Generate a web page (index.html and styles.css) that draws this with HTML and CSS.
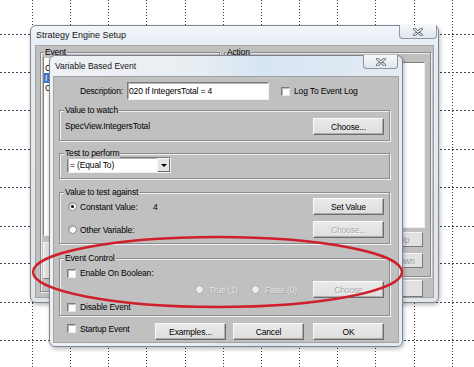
FILE: index.html
```html
<!DOCTYPE html>
<html>
<head>
<meta charset="utf-8">
<title>Strategy Engine Setup</title>
<link rel="stylesheet" href="styles.css">
</head>
<body>
<div class="desktop">
  <svg class="grid" width="474" height="367" viewBox="0 0 474 367">
    <g class="v">
      <line x1="32.5" y1="0" x2="32.5" y2="367"/>
      <line x1="70.5" y1="0" x2="70.5" y2="367"/>
      <line x1="108.5" y1="0" x2="108.5" y2="367"/>
      <line x1="146.5" y1="0" x2="146.5" y2="367"/>
      <line x1="185.5" y1="0" x2="185.5" y2="367"/>
      <line x1="223.5" y1="0" x2="223.5" y2="367"/>
      <line x1="261.5" y1="0" x2="261.5" y2="367"/>
      <line x1="299.5" y1="0" x2="299.5" y2="367"/>
      <line x1="337.5" y1="0" x2="337.5" y2="367"/>
      <line x1="375.5" y1="0" x2="375.5" y2="367"/>
      <line x1="414.5" y1="0" x2="414.5" y2="367"/>
      <line x1="452.5" y1="0" x2="452.5" y2="367"/>
    </g>
    <g class="h">
      <line x1="0" y1="34.5" x2="474" y2="34.5"/>
      <line x1="0" y1="72.5" x2="474" y2="72.5"/>
      <line x1="0" y1="110.5" x2="474" y2="110.5"/>
      <line x1="0" y1="149.5" x2="474" y2="149.5"/>
      <line x1="0" y1="187.5" x2="474" y2="187.5"/>
      <line x1="0" y1="226.5" x2="474" y2="226.5"/>
      <line x1="0" y1="263.5" x2="474" y2="263.5"/>
      <line x1="0" y1="302.5" x2="474" y2="302.5"/>
      <line x1="0" y1="340.5" x2="474" y2="340.5"/>
    </g>
  </svg>

  <div class="win win-outer">
    <div class="titlebar">
      <span class="title">Strategy Engine Setup</span>
      <div class="close">
        <svg width="10" height="8" viewBox="0 0 10 8"><path class="x-out" d="M1.5 1 L8.5 7 M8.5 1 L1.5 7"/><path class="x-in" d="M1.5 1 L8.5 7 M8.5 1 L1.5 7"/></svg>
      </div>
    </div>
    <div class="client outer-client">
      <div class="ocol-left">
        <div class="ogroup og-event">
          <span class="oglabel">Event</span>
          <div class="olist">
            <span class="oitem">C</span>
            <span class="oitem sel">I</span>
            <span class="oitem">C</span>
          </div>
          <div class="obtn obtn-left"></div>
        </div>
      </div>
      <div class="ocol-right">
        <div class="ogroup og-action">
          <span class="oglabel">Action</span>
          <div class="olist olist-action"></div>
          <div class="obtn">Up</div>
          <div class="obtn">Down</div>
        </div>
        <div class="obtn obtn-close"></div>
      </div>
    </div>
  </div>

  <div class="win win-inner">
    <div class="titlebar">
      <span class="title">Variable Based Event</span>
      <div class="close">
        <svg width="10" height="8" viewBox="0 0 10 8"><path class="x-out" d="M1.5 1 L8.5 7 M8.5 1 L1.5 7"/><path class="x-in" d="M1.5 1 L8.5 7 M8.5 1 L1.5 7"/></svg>
      </div>
    </div>
    <div class="client inner-client">
      <div class="desc-row">
        <span class="desc-label">Description:</span>
        <div class="input">020 If IntegersTotal = 4</div>
        <div class="opt log-opt"><span class="cb"></span><span>Log To Event Log</span></div>
      </div>

      <div class="group g-watch">
        <span class="glabel">Value to watch</span>
        <span>SpecView.IntegersTotal</span>
        <div class="btn">Choose...</div>
      </div>

      <div class="group g-test">
        <span class="glabel">Test to perform</span>
        <div class="select"><span>= (Equal To)</span><span class="arrow"><i class="tri"></i></span></div>
      </div>

      <div class="group g-against">
        <span class="glabel">Value to test against</span>
        <div class="grow">
          <div class="opt"><span class="rb on"></span><span class="val-label">Constant Value:</span><span>4</span></div>
          <div class="btn">Set Value</div>
        </div>
        <div class="grow">
          <div class="opt"><span class="rb"></span><span>Other Variable:</span></div>
          <div class="btn dis">Choose...</div>
        </div>
      </div>

      <div class="group g-control">
        <span class="glabel">Event Control</span>
        <div class="opt crow-a"><span class="cb"></span><span>Enable On Boolean:</span></div>
        <div class="crow-b">
          <div class="opt ropt true-opt"><span class="rb dis"></span><span class="dtext">True (1)</span></div>
          <div class="opt ropt false-opt"><span class="rb dis"></span><span class="dtext">False (0)</span></div>
          <div class="btn dis">Choose</div>
        </div>
        <div class="opt crow-c"><span class="cb"></span><span>Disable Event</span></div>
      </div>

      <div class="bottom-row">
        <div class="opt startup-opt"><span class="cb"></span><span>Startup Event</span></div>
        <div class="btn btn-examples">Examples...</div>
        <div class="btn btn-cancel">Cancel</div>
        <div class="btn btn-ok">OK</div>
      </div>
    </div>
  </div>

  <svg class="annot" width="474" height="367" viewBox="0 0 474 367">
    <ellipse cx="217.5" cy="272" rx="184.5" ry="35"/>
  </svg>
</div>
</body>
</html>
```

FILE: styles.css
```css
* { box-sizing: border-box; }
html, body { margin: 0; padding: 0; }
body {
  background: #fff;
  font-family: "Liberation Sans", Arial, sans-serif;
  font-size: 8.5px;
  letter-spacing: -0.15px;
  color: #000;
}
.desktop {
  position: relative;
  width: 474px;
  height: 367px;
  overflow: hidden;
  background: #fff;
}
.grid { position: absolute; left: 0; top: 0; }
.grid .v line { stroke: #3c3c3c; stroke-width: 1; stroke-dasharray: 1 2; }
.grid .h line { stroke: #3c4250; stroke-width: 1; stroke-dasharray: 2 2; }

/* windows */
.win {
  position: absolute;
  display: flex;
  flex-direction: column;
  border: 1px solid #7b8692;
  border-radius: 6px;
  background: linear-gradient(180deg, #f3f6f9 0, #e6edf4 18px, #e1e5ea 100%);
  box-shadow: 1px 2px 4px rgba(0, 0, 0, 0.28);
}
.win-outer { left: 30px; top: 25px; width: 409px; height: 278px; padding: 0 4px 4px; }
.win-inner {
  left: 49px; top: 55px; width: 354px; height: 292px; padding: 0 3px 3px;
  background: linear-gradient(90deg, #eef1f4 0, #e9eef3 40%, #d7e5f2 60%, #e3ebf3 100%);
}
.titlebar { display: flex; align-items: flex-start; justify-content: space-between; flex: none; }
.win-outer .titlebar { height: 19px; }
.win-inner .titlebar { height: 20px; }
.title { font-size: 9px; letter-spacing: 0; color: #141414; white-space: nowrap; }
.win-outer .title { line-height: 19px; margin-left: 1px; }
.win-inner .title { line-height: 20px; margin-left: 2px; font-size: 8.5px; }
.close {
  display: flex; align-items: center; justify-content: center;
  height: 14px;
  border: 1px solid #8a96a3; border-top: none;
  border-radius: 0 0 4px 4px;
  background: linear-gradient(180deg, #f6f8fa, #e1e6ec);
}
.win-outer .close { width: 38px; margin: -1px -3px 0 0; }
.win-inner .close { width: 35px; margin: -1px 1px 0 0; }
.x-out { stroke: #5c6670; stroke-width: 2.8; fill: none; stroke-linecap: round; }
.x-in { stroke: #f4f6f8; stroke-width: 1.1; fill: none; stroke-linecap: round; }

.client {
  flex: 1;
  background: #c0c0c0;
  border: 1px solid #a3a3a3;
}

/* outer window body (partly hidden) */
.outer-client { display: flex; padding: 6px 2px 0 4px; gap: 4px; }
.ocol-left { width: 180px; display: flex; flex-direction: column; }
.ocol-right { flex: 1; display: flex; flex-direction: column; align-items: flex-end; }
.ogroup {
  position: relative;
  border: 1px solid #8c8c8c;
  box-shadow: inset 1px 1px 0 #ececec, 1px 1px 0 #ececec;
  display: flex; flex-direction: column;
}
.og-event { height: 240px; padding: 4px 2px 0 2px; }
.og-action { width: 100%; height: 225px; padding: 9px 5px 0 5px; align-items: flex-end; }
.oglabel {
  position: absolute; top: -6px; padding: 0 1px;
  background: #c0c0c0; line-height: 11px;
}
.og-event .oglabel { left: 3px; }
.og-action .oglabel { left: 1px; }
.olist {
  width: 100%; height: 179px; background: #fff;
  border: 1px solid; border-color: #808080 #f0f0f0 #f0f0f0 #808080;
  display: flex; flex-direction: column; padding-top: 5px;
}
.olist-action { height: 166px; }
.oitem { line-height: 10px; padding-left: 1px; }
.oitem.sel { background: #3a78d6; color: #fff; }
.obtn {
  width: 38px; height: 15px; margin-top: 4px;
  display: flex; align-items: center; justify-content: center;
  background: #e2e2e2; color: #9a9a9a;
  border: 1px solid; border-color: #f6f6f6 #7a7a7a #7a7a7a #f6f6f6;
}
.og-action .obtn { margin-right: 2px; }
.og-action .obtn + .obtn { margin-top: 6px; }
.obtn-left { width: 60px; height: 37px; margin-top: 6px; }
.obtn-close { height: 17px; margin: 3px 8px 0 0; width: 60px; }

/* inner window body */
.inner-client {
  display: flex; flex-direction: column;
  padding: 5px 8px 0 5px;
}
.desc-row { display: flex; align-items: center; height: 18px; flex: none; }
.desc-label { width: 64px; text-align: right; margin-right: 4px; }
.input {
  width: 142px; height: 18px;
  display: flex; align-items: center; padding-left: 1px;
  background: #fff;
  border: 1px solid; border-color: #7c7c7c #f2f2f2 #f2f2f2 #7c7c7c;
  box-shadow: inset 1px 1px 0 #b4b4b4;
  white-space: nowrap;
}
.log-opt { margin-left: 12px; }

.opt { display: flex; align-items: center; white-space: nowrap; }
.cb {
  width: 9px; height: 9px; flex: none; margin-right: 4px;
  background: #fff;
  border: 1px solid; border-color: #7a7a7a #e6e6e6 #e6e6e6 #7a7a7a;
  box-shadow: inset 1px 1px 0 #b9b9b9;
}
.rb {
  position: relative;
  width: 9px; height: 9px; flex: none; margin-right: 3px;
  border-radius: 50%;
  background: #fff;
  border: 1px solid #8a8a8a;
  box-shadow: inset 1px 1px 0 #bcbcbc;
}
.rb.on::after {
  content: ""; position: absolute; left: 2px; top: 2px;
  width: 3px; height: 3px; border-radius: 50%; background: #000;
}
.rb.dis { background: #ececec; border-color: #a9a9a9; box-shadow: none; }
.dtext { color: #e2e2e2; text-shadow: 1px 1px 0 #a9a9a9; }

.group {
  position: relative; flex: none;
  border: 1px solid #8c8c8c;
  box-shadow: inset 1px 1px 0 #f0f0f0, 1px 1px 0 #f0f0f0;
}
.glabel {
  position: absolute; left: 4px; top: -6px;
  padding: 0 1px; line-height: 11px;
  background: #c0c0c0; white-space: nowrap;
}
.g-watch {
  margin-top: 10px; height: 31px;
  display: flex; align-items: flex-start; justify-content: space-between;
  padding: 7px 5px 0 5px;
}
.g-watch > span:nth-child(2) { line-height: 17px; }
.g-test { margin-top: 12px; height: 26px; padding: 3px 5px 0 7px; }
.select {
  width: 104px; height: 16px;
  display: flex; align-items: center; padding-left: 2px;
  background: #fff;
  border: 1px solid; border-color: #7c7c7c #f2f2f2 #f2f2f2 #7c7c7c;
  box-shadow: inset 1px 1px 0 #b4b4b4;
}
.arrow {
  margin-left: auto; width: 13px; height: 14px;
  display: flex; align-items: center; justify-content: center;
  background: #e4e4e4;
  border: 1px solid; border-color: #fafafa #6e6e6e #6e6e6e #fafafa;
}
.tri {
  width: 0; height: 0;
  border-left: 3px solid transparent; border-right: 3px solid transparent;
  border-top: 3px solid #000;
}
.g-against {
  margin-top: 13px; height: 52px;
  display: flex; flex-direction: column; gap: 6px;
  padding: 5px 5px 0 8px;
}
.grow { display: flex; align-items: center; justify-content: space-between; height: 17px; }
.val-label { width: 73px; }
.g-control {
  margin-top: 14px; height: 58px;
  display: flex; flex-direction: column;
  padding: 8px 5px 0 7px;
}
.crow-a { height: 12px; }
.crow-b { display: flex; align-items: center; height: 17px; margin-top: 2px; }
.true-opt { margin-left: 128px; }
.false-opt { margin-left: 13px; }
.ropt .rb { margin-right: 5px; }
.crow-b .btn { margin-left: auto; }
.crow-c { height: 12px; margin-top: 3px; }

.bottom-row {
  display: flex; align-items: flex-start; height: 17px; flex: none;
  margin-top: 7px; padding: 0 6px 0 8px;
}
.startup-opt { height: 11px; }
.btn-examples { margin-left: auto; width: 73px; }
.btn-cancel { margin-left: 7px; width: 70px; }
.btn-ok { margin-left: 9px; width: 70px; }

.btn {
  width: 71px; height: 17px; flex: none;
  display: flex; align-items: center; justify-content: center;
  background: linear-gradient(180deg, #eaeaea, #dedede);
  border: 1px solid; border-color: #fbfbfb #6c6c6c #6c6c6c #fbfbfb;
  box-shadow: inset -1px -1px 0 #adadad;
  white-space: nowrap;
}
.btn.dis { color: #a9a9a9; text-shadow: 1px 1px 0 #fafafa; }

.annot { position: absolute; left: 0; top: 0; pointer-events: none; }
.annot ellipse { fill: none; stroke: #cf1f2a; stroke-width: 2.4; }
```
